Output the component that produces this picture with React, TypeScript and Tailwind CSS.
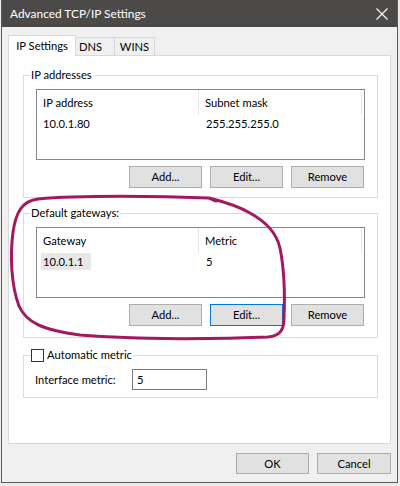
import React from "react";

const font = { fontFamily: 'Lato, "Noto Sans", "Liberation Sans", sans-serif' };

function Button({ label, focused = false, w = "w-[73px] h-[22px]" }: { label: string; focused?: boolean; w?: string }) {
  return (
    <div
      className={`${w} flex items-center justify-center bg-[#e1e1e1] border text-black ${
        focused ? "border-[#0078d7]" : "border-[#adadad]"
      }`}
    >
      {label}
    </div>
  );
}

function ListView({
  cols,
  row,
  highlight = false,
}: {
  cols: [string, string];
  row: [string, string];
  highlight?: boolean;
}) {
  return (
    <div className="h-[71px] border border-[#828790] bg-white flex flex-col">
      <div className="h-[25px] flex">
        <div className="w-[162px] h-full flex items-center pl-[6px] border-r border-[#e5e5e5]">{cols[0]}</div>
        <div className="w-[163px] h-full flex items-center pl-[6px] border-r border-[#e5e5e5]">{cols[1]}</div>
      </div>
      <div className="h-[17px] flex">
        <div className="w-[162px] flex items-center pl-[4px]">
          <span className={`h-full flex items-center px-[2px] ${highlight ? "bg-[#e8e8e8] pr-[8px]" : ""}`}>{row[0]}</span>
        </div>
        <div className="flex items-center pl-[7px]">{row[1]}</div>
      </div>
    </div>
  );
}

function Group({
  legend,
  className,
  pb,
  children,
}: {
  legend: React.ReactNode;
  className: string;
  pb: string;
  children: React.ReactNode;
}) {
  return (
    <fieldset className={`border border-[#dcdcdc] px-[6px] ${pb} ${className}`}>
      <legend className="px-[1px] h-[16px] leading-[16px]">{legend}</legend>
      <div className="px-[6px]">{children}</div>
    </fieldset>
  );
}

export default function App() {
  return (
    <div className="relative w-[400px] h-[486px] bg-[#ececec] pl-[1px] text-[11.2px] leading-[16px] text-black" style={font}>
      <div className="w-[397px] h-[483px] border-x border-b border-[#5a5a5a] bg-[#f0f0f0] flex flex-col">
        {/* title bar */}
        <div className="h-[27px] shrink-0 bg-[#4b4a48] flex items-center justify-between pl-[8px] pr-[8px] text-white text-[11.9px]">
          <span>Advanced TCP/IP Settings</span>
          <svg width="12" height="12" viewBox="0 0 12 12" className="mr-[1px]">
            <path d="M0.5 0.5 L11.5 11.5 M11.5 0.5 L0.5 11.5" stroke="#ffffff" strokeWidth="1.1" />
          </svg>
        </div>

        {/* tabs */}
        <div className="pt-[8px] px-[6px]">
          <div className="flex items-end h-[20px]">
            <div className="w-[68px] h-[21px] -mb-px relative z-10 bg-white border-t border-x border-[#d9d9d9] flex items-center justify-center">
              IP Settings
            </div>
            <div className="w-[39px] h-[18px] border-t border-r border-[#d9d9d9] flex items-center pl-[3px]">DNS</div>
            <div className="w-[40px] h-[18px] border-t border-r border-[#d9d9d9] flex items-center justify-center">WINS</div>
          </div>

          {/* tab page */}
          <div className="h-[389px] bg-white border border-[#d9d9d9] pl-[14px] pr-[12px] flex flex-col">
            <Group legend="IP addresses" className="mt-[11px]" pb="pb-[9px]">
              <div className="pt-[6px]">
                <ListView cols={["IP address", "Subnet mask"]} row={["10.0.1.80", "255.255.255.0"]} />
              </div>
              <div className="mt-[6px] flex justify-end gap-[8px] pr-[1px]">
                <Button label="Add..." />
                <Button label="Edit..." />
                <Button label="Remove" />
              </div>
            </Group>

            <Group legend="Default gateways:" className="mt-[7px]" pb="pb-[11px]">
              <div className="pt-[6px]">
                <ListView cols={["Gateway", "Metric"]} row={["10.0.1.1", "5"]} highlight />
              </div>
              <div className="mt-[6px] flex justify-end gap-[8px] pr-[1px]">
                <Button label="Add..." />
                <Button label="Edit..." focused />
                <Button label="Remove" />
              </div>
            </Group>

            <Group
              legend={
                <span className="flex items-center gap-[3px]">
                  <span className="w-[13px] h-[13px] border border-[#333333] bg-white inline-block" />
                  <span>Automatic metric</span>
                </span>
              }
              className="mt-[9px]"
              pb="pb-[7px]"
            >
              <div className="pt-[6px] flex items-center">
                <span className="w-[97px] -ml-[1px]">Interface metric:</span>
                <div className="w-[75px] h-[21px] border border-[#7a7a7a] bg-white flex items-center pl-[4px]">5</div>
              </div>
            </Group>
          </div>

          {/* dialog buttons */}
          <div className="mt-[9px] flex justify-end gap-[8px]">
            <Button label="OK" w="w-[73px] h-[21px]" />
            <Button label="Cancel" w="w-[74px] h-[21px]" />
          </div>
        </div>
      </div>

      {/* hand-drawn highlight loop */}
      <svg className="absolute left-0 top-0 pointer-events-none" width="400" height="486" viewBox="0 0 400 486">
        <path
          d="M209 198 C160 196, 80 195, 38 199 C22 201, 16 212, 13 232 C10 255, 11 285, 19 306 C26 322, 42 330, 80 335 C140 340, 220 339, 268 337 C280 336, 284 330, 284 318 C285 295, 284 268, 280 248 C276 232, 266 222, 250 213 C238 206, 225 202, 209 198 L216 201"
          fill="none"
          stroke="#a3185f"
          strokeWidth="3"
          strokeLinecap="round"
          strokeLinejoin="round"
        />
      </svg>
    </div>
  );
}
